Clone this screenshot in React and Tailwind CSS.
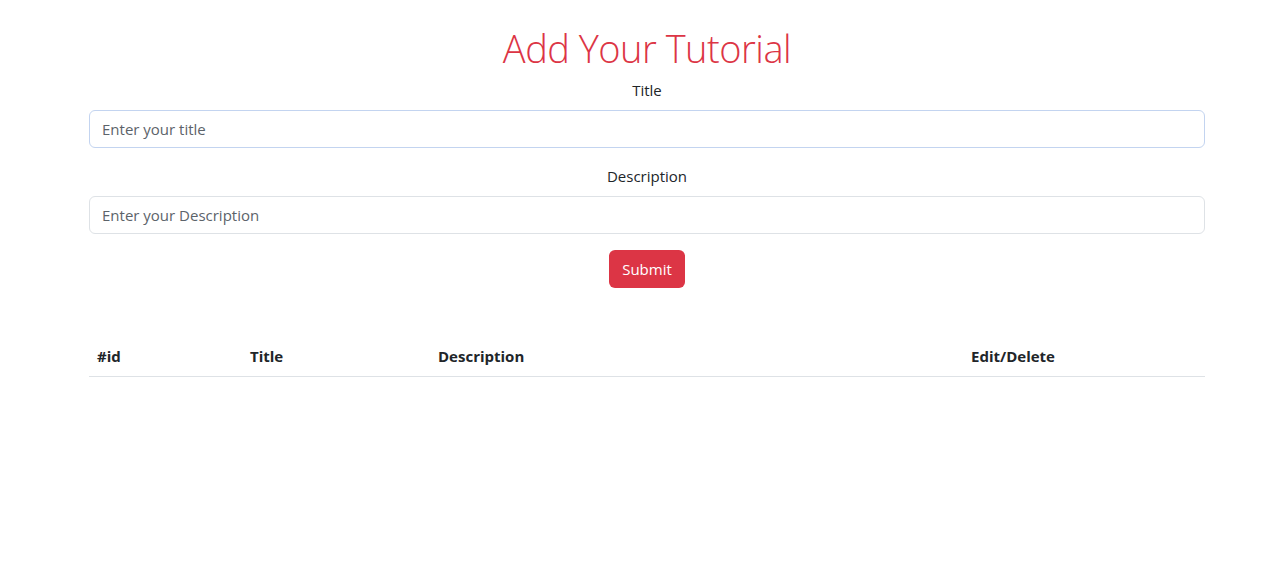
import React, { useState } from "react";

const App = () => {
  const [title, setTitle] = useState("");
  const [description, setDescription] = useState("");

  return (
    <div
      className="min-h-screen bg-white pl-3 text-[#212529]"
      style={{ fontFamily: '"Open Sans", "Noto Sans", sans-serif' }}
    >
      <div className="max-w-[1140px] mx-auto px-3">
        <h1 className="pt-6 text-center text-[38px] leading-[48px] font-light tracking-[-0.5px] text-[#dc3545]">
          Add Your Tutorial
        </h1>

        <form onSubmit={(e) => e.preventDefault()} className="flex flex-col">
          <label className="mt-1.5 text-center text-[15px] leading-6">Title</label>
          <input
            value={title}
            onChange={(e) => setTitle(e.target.value)}
            placeholder="Enter your title"
            className="mt-2 h-[38px] w-full rounded-md border border-[#c3d4f0] px-3 text-[15px] text-[#212529] placeholder:text-[#5c636a] outline-none"
          />

          <label className="mt-4 text-center text-[15px] leading-6">Description</label>
          <input
            value={description}
            onChange={(e) => setDescription(e.target.value)}
            placeholder="Enter your Description"
            className="mt-2 h-[38px] w-full rounded-md border border-[#dee2e6] px-3 text-[15px] text-[#212529] placeholder:text-[#5c636a] outline-none"
          />

          <div className="mt-4 flex justify-center">
            <button
              type="submit"
              className="h-[38px] w-[76px] rounded-md bg-[#dc3545] text-[15px] text-white"
            >
              Submit
            </button>
          </div>
        </form>

        <table className="mt-12 w-full border-collapse text-left">
          <thead>
            <tr className="border-b border-[#dee2e6]">
              <th className="w-[153px] px-2 py-2 text-[15px] font-bold leading-6">#id</th>
              <th className="w-[188px] px-2 py-2 text-[15px] font-bold leading-6">Title</th>
              <th className="w-[533px] px-2 py-2 text-[15px] font-bold leading-6">Description</th>
              <th className="px-2 py-2 text-[15px] font-bold leading-6">Edit/Delete</th>
            </tr>
          </thead>
          <tbody></tbody>
        </table>
      </div>
    </div>
  );
};

export default App;
